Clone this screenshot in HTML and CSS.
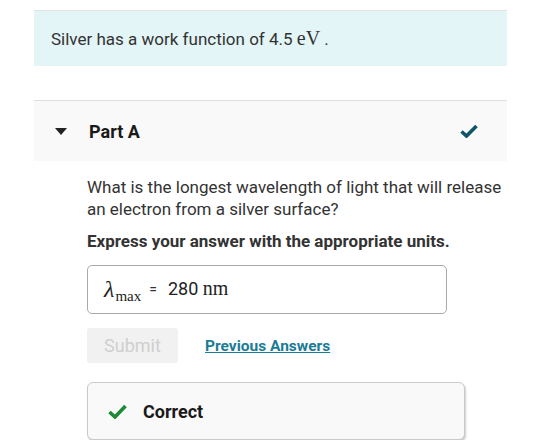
FILE: index.html
```html
<!DOCTYPE html>
<html>
<head>
<meta charset="utf-8">
<link rel="stylesheet" href="styles.css">
</head>
<body>
<div class="wrap">
  <div class="intro">
    <p>Silver has a work function of 4.5 <span class="math">eV</span> .</p>
  </div>
  <div class="part">
    <div class="part-head">
      <span class="tri"></span>
      <span class="part-title">Part A</span>
      <svg class="head-check" width="18" height="14" viewBox="0 0 18 14"><path d="M1.5 7.5 L6.5 12 L16.5 2" fill="none" stroke="#0e5567" stroke-width="3.6" stroke-linejoin="miter"/></svg>
    </div>
    <div class="part-body">
      <p class="question">What is the longest wavelength of light that will release an electron from a silver surface?</p>
      <p class="instr">Express your answer with the appropriate units.</p>
      <div class="answer">
        <span class="lam">λ<sub>max</sub></span>
        <span class="eq">=</span>
        <span class="val">280 <span class="unit">nm</span></span>
      </div>
      <div class="actions">
        <button class="submit" disabled>Submit</button>
        <a class="prev" href="#">Previous Answers</a>
      </div>
      <div class="feedback">
        <svg class="ok" width="19" height="15" viewBox="0 0 19 15"><path d="M1.5 8 L7 13 L17.5 2" fill="none" stroke="#1d8a36" stroke-width="3.6"/></svg>
        <span class="ok-text">Correct</span>
      </div>
    </div>
  </div>
</div>
</body>
</html>
```
FILE: styles.css
```css
* { box-sizing: border-box; }
body {
  margin: 0;
  background: #fff;
  font-family: Roboto, "Liberation Sans", sans-serif;
  color: #333;
}
.wrap {
  padding: 10px 33px 0 34px;
}
.intro {
  border-top: 1px solid #e2e2e2;
  background: #e3f5f6;
  height: 56px;
  display: flex;
  align-items: center;
  padding: 0 17px;
}
.intro p {
  margin: 0;
  font-size: 17px;
}
.math {
  font-family: "Liberation Serif", "DejaVu Serif", serif;
  font-size: 20px;
}
.part {
  margin-top: 34px;
}
.part-head {
  border-top: 1px solid #dedede;
  background: #f9f9f9;
  height: 61px;
  display: flex;
  align-items: center;
  padding: 0 29px 0 21px;
}
.tri {
  width: 0;
  height: 0;
  border-left: 6px solid transparent;
  border-right: 6px solid transparent;
  border-top: 7px solid #222;
  margin-right: 22px;
}
.part-title {
  font-size: 18px;
  font-weight: bold;
  color: #1a1a1a;
  flex: 1;
}
.head-check { display: block; }
.part-body {
  padding: 15px 0 0 53px;
}
.question {
  margin: 0;
  font-size: 17px;
  line-height: 22px;
  color: #333;
}
.instr {
  margin: 10px 0 0;
  font-size: 17px;
  line-height: 22px;
  font-weight: bold;
  color: #333;
}
.answer {
  margin-top: 13px;
  width: 360px;
  height: 49px;
  border: 1px solid #aaa;
  border-radius: 5px;
  display: flex;
  align-items: center;
  padding: 0 0 2px 16px;
}
.lam {
  font-family: "Liberation Serif", "DejaVu Serif", serif;
  font-style: italic;
  font-size: 24px;
  line-height: 24px;
  color: #222;
}
.lam sub {
  font-style: normal;
  font-size: 15px;
  line-height: 0;
  vertical-align: -4px;
  margin-left: 1px;
}
.eq {
  font-size: 14px;
  margin: 0 11px 0 8px;
}
.val {
  font-size: 18px;
  line-height: 22px;
  color: #222;
}
.unit {
  font-family: "Liberation Serif", "DejaVu Serif", serif;
  font-size: 20px;
}
.actions {
  margin-top: 14px;
  display: flex;
  align-items: center;
}
.submit {
  width: 91px;
  height: 35px;
  border: none;
  border-radius: 3px;
  background: #f1f1f1;
  color: #cfcfcf;
  font-family: Roboto, "Liberation Sans", sans-serif;
  font-size: 18px;
  padding: 0;
}
.prev {
  margin-left: 27px;
  font-size: 15.5px;
  font-weight: bold;
  color: #1b7c96;
  text-decoration: underline;
}
.feedback {
  margin-top: 19px;
  width: 378px;
  height: 58px;
  border: 1px solid #c9c9c9;
  border-radius: 6px;
  background: #f9f9f9;
  box-shadow: 1px 2px 2px rgba(0,0,0,0.2);
  display: flex;
  align-items: center;
  padding: 0 0 0 20px;
}
.ok { display: block; margin-right: 16px; }
.ok-text {
  font-size: 18px;
  font-weight: bold;
  color: #1a1a1a;
}
```
